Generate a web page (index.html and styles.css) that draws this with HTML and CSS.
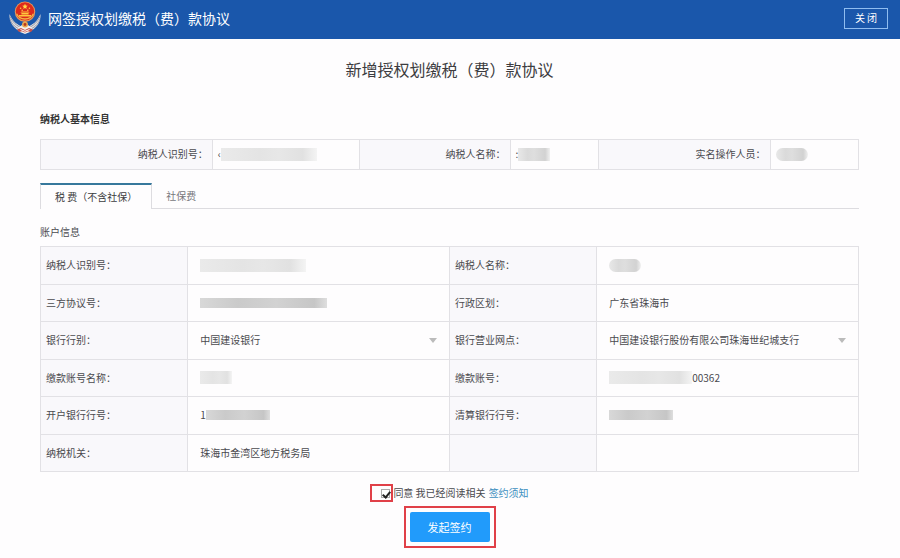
FILE: index.html
```html
<!DOCTYPE html>
<html lang="zh-CN">
<head>
<meta charset="utf-8">
<meta name="viewport" content="width=device-width, initial-scale=1">
<title>网签授权划缴税（费）款协议</title>
<link rel="stylesheet" href="styles.css">
</head>
<body>
<header class="topbar">
  <svg class="emblem" viewBox="0 0 34 34" aria-hidden="true">
    <path d="M1.500 13c-.5 8 4 15 12 18l1.500-5C9 24 4.500 20 1.500 13z" fill="#e4e1df"/>
    <path d="M32.500 13c.5 8-4 15-12 18L19 26c6-2 10.500-6 13.500-13z" fill="#e4e1df"/>
    <path d="M2 18c2 6 6 9 12 11M32 18c-2 6-6 9-12 11M2 15.500c3 6 6 9 12 11.500M32 15.500c-3 6-6 9-12 11.500" fill="none" stroke="#8589a0" stroke-width="0.8"/>
    <g transform="translate(3.400 0) scale(0.8)">
      <circle cx="17" cy="13.500" r="12.800" fill="#e8995a"/>
      <circle cx="17" cy="13" r="11.500" fill="#dc2a1c"/>
      <path d="M17 3.500l1 2.200 2.400.3-1.800 1.600.5 2.400-2.100-1.200-2.100 1.200.5-2.400L13.600 6l2.400-.3z" fill="#ffd84a"/>
      <g fill="#ffc83d">
        <circle cx="11.500" cy="9" r="1"/><circle cx="22.500" cy="9" r="1"/>
        <circle cx="13.500" cy="11.500" r="1"/><circle cx="20.500" cy="11.500" r="1"/>
        <path d="M11 14.500l2-1.500h8l2 1.500zM12.500 15h9v2h-9zM9.500 17.500h15v1.800h-15z"/>
      </g>
      <path d="M6.500 16c2 4.500 5.500 6.500 10.500 6.500S25.500 20.500 27.500 16" fill="none" stroke="#f3b545" stroke-width="1.600"/>
    </g>
    <path d="M10 27l4-3h6l4 3-2 4-5 2-5-2z" fill="#f3f0ec"/>
    <circle cx="17" cy="23.500" r="3" fill="#e8a64e"/>
    <circle cx="17" cy="23.500" r="1.400" fill="#b9391f"/>
    <path d="M9 28.500l4-1.500 4 2 4-2 4 1.500-2 2.500-3-.8-3 1.300-3-1.300-3 .8z" fill="#c4504a"/>
    <path d="M12.500 28.500l4.500 1.800 4.500-1.800" fill="none" stroke="#fff" stroke-width="1"/>
  </svg>
  <span class="brand">网签授权划缴税（费）款协议</span>
  <button class="close" type="button">关 闭</button>
</header>

<main class="page">
  <h1>新增授权划缴税（费）款协议</h1>

  <h2>纳税人基本信息</h2>
  <table class="grid taxpayer">
    <colgroup><col class="t1"><col class="t2"><col class="t3"><col class="t4"><col class="t5"><col class="t6"></colgroup>
    <tr>
      <th scope="row">纳税人识别号：</th>
      <td><span class="masked">‹<i class="mask w-l pale"></i></span></td>
      <th scope="row">纳税人名称：</th>
      <td><span class="masked">:<i class="mask w-s"></i></span></td>
      <th scope="row">实名操作人员：</th>
      <td><span class="masked"><i class="mask w-s round"></i></span></td>
    </tr>
  </table>

  <nav class="tabs">
    <button class="tab active" type="button">税 费（不含社保）</button>
    <button class="tab" type="button">社保费</button>
  </nav>

  <h3>账户信息</h3>
  <form>
    <table class="grid account">
      <colgroup><col class="label"><col class="value"><col class="label"><col class="value"></colgroup>
      <tr>
        <th scope="row">纳税人识别号：</th>
        <td><span class="masked"><i class="mask w-xl pale"></i></span></td>
        <th scope="row">纳税人名称：</th>
        <td><span class="masked"><i class="mask w-s round"></i></span></td>
      </tr>
      <tr>
        <th scope="row">三方协议号：</th>
        <td><span class="masked"><i class="mask w-xxl thin"></i></span></td>
        <th scope="row">行政区划：</th>
        <td>广东省珠海市</td>
      </tr>
      <tr>
        <th scope="row"><label for="bank">银行行别：</label></th>
        <td><div class="dropdown"><select id="bank"><option>中国建设银行</option></select></div></td>
        <th scope="row"><label for="branch">银行营业网点：</label></th>
        <td><div class="dropdown"><select id="branch"><option>中国建设银行股份有限公司珠海世纪城支行</option></select></div></td>
      </tr>
      <tr>
        <th scope="row">缴款账号名称：</th>
        <td><span class="masked"><i class="mask w-s pale"></i></span></td>
        <th scope="row">缴款账号：</th>
        <td><span class="masked"><i class="mask w-m pale"></i>00362</span></td>
      </tr>
      <tr>
        <th scope="row">开户银行行号：</th>
        <td><span class="masked">1<i class="mask w-n thin"></i></span></td>
        <th scope="row">清算银行行号：</th>
        <td><span class="masked"><i class="mask w-n thin"></i></span></td>
      </tr>
      <tr>
        <th scope="row">纳税机关：</th>
        <td>珠海市金湾区地方税务局</td>
        <th></th>
        <td></td>
      </tr>
    </table>

    <div class="consent">
      <span class="check-mark"><input type="checkbox" id="agree" checked></span>
      <label for="agree">同意 我已经阅读相关</label>
      <a href="#notice">签约须知</a>
    </div>
    <div class="actions">
      <span class="highlight"><button class="submit" type="button">发起签约</button></span>
    </div>
  </form>
</main>
</body>
</html>
```
FILE: styles.css
```css
* {
  box-sizing: border-box;
}

body {
  margin: 0;
  background: #fefdfe;
  color: #4a4a4e;
  font: 10px/16px "Noto Sans CJK SC", sans-serif;
}

button,
select,
input {
  margin: 0;
  font: inherit;
  color: inherit;
}

.topbar {
  display: flex;
  align-items: center;
  height: 39px;
  padding: 0 12px 3px 8px;
  background: #1a57ab;
  color: #fff;
}

.emblem {
  width: 34px;
  height: 34px;
}

.brand {
  margin-left: 6px;
  font-size: 14px;
  line-height: 20px;
}

.close {
  width: 44px;
  height: 21px;
  margin-left: auto;
  padding: 0;
  border: 1px solid #8fbdf0;
  background: none;
  line-height: 16px;
}

.page {
  padding: 0 41px 8px 40px;
}

h1 {
  margin: 18px 0 0;
  color: #3c3c40;
  font-size: 16px;
  font-weight: 400;
  line-height: 24px;
  text-align: center;
}

h2 {
  margin: 30px 0 12px;
  color: #333;
  font-size: 10px;
  font-weight: 700;
  line-height: 16px;
}

h3 {
  margin: 15px 0 6px;
  font-size: 10px;
  font-weight: 400;
  line-height: 16px;
}

.grid {
  width: 100%;
  border-collapse: collapse;
  table-layout: fixed;
}

.grid th,
.grid td {
  padding: 0 0 1px;
  border: 1px solid #e2e1e5;
  font-weight: 400;
  text-align: left;
}

.grid th {
  background: #f9f8fb;
}

.taxpayer tr {
  height: 30px;
}

.taxpayer th {
  padding-right: 4px;
  text-align: right;
}

.taxpayer td {
  padding-left: 5px;
}

.t1,
.t5 {
  width: 21%;
}

.t2 {
  width: 18%;
}

.t3 {
  width: 18.4%;
}

.t4,
.t6 {
  width: 10.8%;
}

.account tr:nth-child(odd) {
  height: 38px;
}

.account tr:nth-child(even) {
  height: 37px;
}

.account .label {
  width: 18%;
}

.account .value {
  width: 32%;
}

.account th {
  padding-left: 5px;
}

.account td {
  padding-left: 12px;
}

.masked {
  display: flex;
  align-items: center;
}

.mask {
  height: 13px;
  background: linear-gradient(90deg, #e8e8e8, #dadada 30%, #dedede 50%, #d2d2d2 85%, #f0f0f0);
}

.pale {
  background: linear-gradient(90deg, #eaeaea, #e4e4e4 40%, #e7e7e7 60%, #e1e1e1 85%, #f4f4f4);
}

.thin {
  height: 10px;
  background: linear-gradient(90deg, #d8d8d8, #cacaca 30%, #d2d2d2 60%, #c6c6c6 90%, #dedede);
}

.round {
  border-radius: 7px;
}

.w-s {
  width: 32px;
}

.w-n {
  width: 64px;
}

.w-m {
  width: 83px;
}

.w-l {
  width: 96px;
}

.w-xl {
  width: 106px;
}

.w-xxl {
  width: 127px;
}

.dropdown {
  display: flex;
  align-items: center;
  padding-right: 12px;
}

.dropdown select {
  flex: 1;
  min-width: 0;
  padding: 0;
  border: 0;
  appearance: none;
  background: none;
}

.dropdown::after {
  content: "";
  border: 4px solid transparent;
  border-top: 5px solid #bbb;
  border-bottom: 0;
  pointer-events: none;
}

.tabs {
  display: flex;
  height: 26px;
  margin-top: 13px;
  border-bottom: 1px solid #dddce0;
}

.tab {
  padding: 0 14px;
  border: 0;
  background: none;
  color: #77777b;
}

.tab.active {
  height: 26px;
  border: 1px solid #dddce0;
  border-top: 2px solid #37789c;
  border-bottom: 0;
  background: #fefdfe;
  color: #3c3c40;
}

.consent {
  display: flex;
  align-items: center;
  justify-content: center;
  margin-top: 12px;
}

.check-mark {
  display: flex;
  align-items: center;
  justify-content: flex-end;
  width: 23px;
  height: 18px;
  padding-right: 1px;
  border: 2px solid #e04048;
}

.check-mark input {
  width: 9px;
  height: 9px;
  appearance: none;
  border: 1px solid #aaa;
  background: #fff;
}

.check-mark input:checked::before {
  content: "";
  display: block;
  width: 3px;
  height: 6px;
  margin: 0 2px;
  border: solid #222;
  border-width: 0 2px 2px 0;
  transform: rotate(40deg);
}

.consent a {
  margin-left: 3px;
  color: #3d8fc0;
  text-decoration: none;
}

.actions {
  display: flex;
  justify-content: center;
  margin-top: 4px;
}

.highlight {
  padding: 4px;
  border: 2px solid #e04048;
}

.submit {
  display: block;
  width: 80px;
  height: 30px;
  padding: 0;
  border: 0;
  border-radius: 2px;
  background: #219bfb;
  color: #fff;
  font-size: 11px;
}
```
